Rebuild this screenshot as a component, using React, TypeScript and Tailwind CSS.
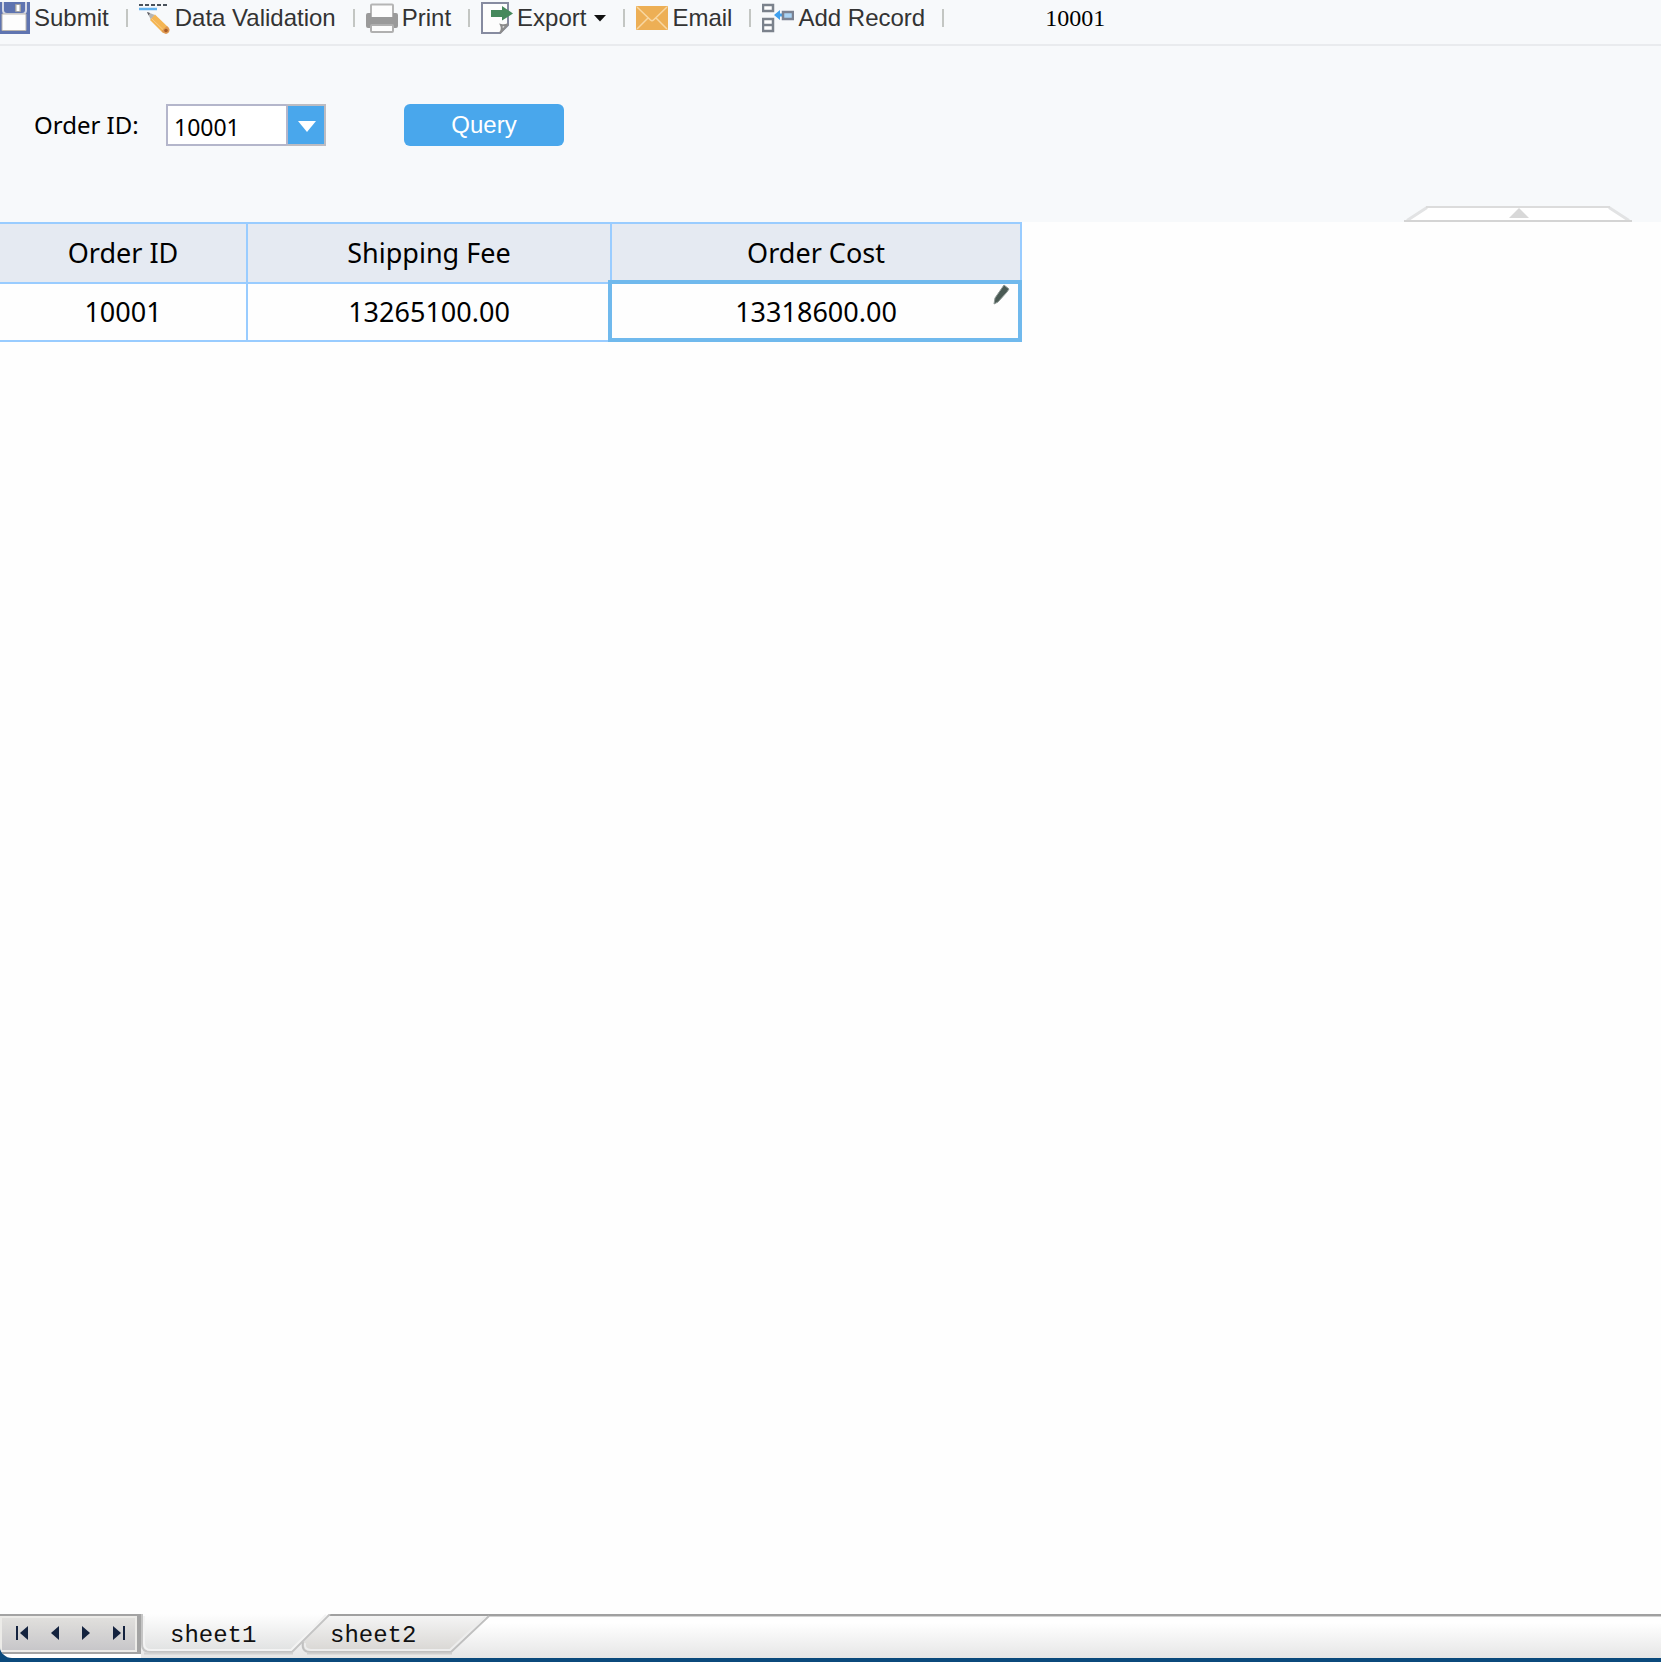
import { useState } from 'react';
import type { ReactNode } from 'react';

const ORDER_IDS = ['10001', '10002', '10003'];

const SHEETS = ['sheet1', 'sheet2'];

function SaveIcon() {
  return (
    <svg width="30" height="32" viewBox="0 0 30 32" className="shrink-0" aria-hidden="true">
      <path d="M0 0H30V32H0Z" fill="#5f74b0" />
      <path d="M2 0H27V8Q27 13 22 13H7Q2 13 2 8Z" fill="#d6d9e4" />
      <path d="M4 0H25V8Q25 11 22 11H7Q4 11 4 8Z" fill="#5f74b0" />
      <path d="M2 12H26V28.500H2Z" fill="#fdfdfd" stroke="#b9b4ae" strokeWidth="1" />
      <rect x="15" y="2" width="6" height="8" rx="1" fill="#a3a3a3" />
      <rect x="16.500" y="3" width="3" height="6" fill="#fff" />
    </svg>
  );
}

function ValidationIcon() {
  return (
    <svg width="32" height="32" viewBox="0 0 32 32" className="shrink-0" aria-hidden="true">
      <path d="M0 3H29" stroke="#4a525c" strokeWidth="2" strokeDasharray="4 2" />
      <path d="M0 7H18" stroke="#62b3f0" strokeWidth="2.500" />
      <path d="M8 10L16 13L12 18Z" fill="#b5b5b5" />
      <path d="M8 10L11 11L9.500 13.500Z" fill="#5f5f66" />
      <path d="M16 12.500L30 26L24 31L11 18Z" fill="#f4b553" />
      <path d="M12.500 16.500L26 29.500" stroke="#f8cc86" strokeWidth="1" />
      <path d="M24.500 31L22.500 29L28 24L30.500 27Q31 31 27 32Z" fill="#dd9750" />
      <circle cx="27" cy="28.500" r="1.800" fill="#a65b26" />
    </svg>
  );
}

function PrintIcon() {
  return (
    <svg width="32" height="32" viewBox="0 0 32 32" className="shrink-0" aria-hidden="true">
      <rect x="5" y="2.500" width="22" height="16" rx="1" fill="#fdfdfd" stroke="#b5b5b5" strokeWidth="2" />
      <path d="M2 11H5V15H27V11H30Q32 11 32 13V24Q32 26 30 26H2Q0 26 0 24V13Q0 11 2 11Z" fill="#9a9a9a" />
      <rect x="5" y="23" width="22" height="7" rx="1" fill="#fdfdfd" stroke="#b0b0b0" strokeWidth="2" />
    </svg>
  );
}

function ExportIcon() {
  return (
    <svg width="32" height="32" viewBox="0 0 32 32" className="shrink-0" aria-hidden="true">
      <path d="M1 1H27V23L19 31H1Z" fill="#fdfdfd" stroke="#868ba0" strokeWidth="2" />
      <path d="M19 31Q22 27 20 23Q24 24 27 22Z" fill="#f4f4f4" stroke="#8c8c8c" strokeWidth="2" />
      <path d="M10 8H21V4L32 11.500L21 18.500V15H10Z" fill="#45885c" />
    </svg>
  );
}

function EmailIcon() {
  return (
    <svg width="32" height="32" viewBox="0 0 32 32" className="shrink-0" aria-hidden="true">
      <rect x="0" y="4" width="32" height="24" rx="1" fill="#edaf55" />
      <path d="M1 5L14.500 18Q16 19.500 17.500 18L31 5M1 27L12 16M31 27L20 16" fill="none" stroke="#f8d7a2" strokeWidth="1.500" />
    </svg>
  );
}

function AddRecordIcon() {
  return (
    <svg width="32" height="32" viewBox="0 0 32 32" className="shrink-0" aria-hidden="true">
      <rect x="1" y="3" width="10" height="6" fill="#fff" stroke="#7b828c" strokeWidth="2.500" />
      <rect x="1" y="17" width="10" height="12" fill="#fff" stroke="#7b828c" strokeWidth="2.500" />
      <path d="M1 23H11" stroke="#7b828c" strokeWidth="2.500" />
      <path d="M12 13L18 8V11.500H21V14.500H18V18Z" fill="#3fa0ee" />
      <rect x="21" y="10" width="10" height="7" fill="#a9d3f5" stroke="#7b8292" strokeWidth="2.500" />
    </svg>
  );
}

interface ToolButtonProps {
  icon: ReactNode;
  label: string;
  hasMenu?: boolean;
}

function ToolButton({ icon, label, hasMenu }: ToolButtonProps) {
  return (
    <div className="flex shrink-0 items-center">
      <button type="button" className="flex items-center gap-1 text-2xl leading-8 text-[#333]">
        {icon}
        <span>{label}</span>
        {hasMenu && (
          <svg width="12" height="8" viewBox="0 0 12 8" className="ml-1" aria-hidden="true">
            <path d="M0 1H12L6 7.500Z" fill="#111" />
          </svg>
        )}
      </button>
      <span className="ml-[17px] mr-[11px] h-[18px] w-0.5 bg-[#c3c6c3]" />
    </div>
  );
}

function Toolbar({ orderId }: { orderId: string }) {
  return (
    <div className="flex items-start border-b-2 border-[#e9ebee] pt-0.5 pb-2.5">
      <ToolButton icon={<SaveIcon />} label="Submit" />
      <ToolButton icon={<ValidationIcon />} label="Data Validation" />
      <ToolButton icon={<PrintIcon />} label="Print" />
      <ToolButton icon={<ExportIcon />} label="Export" hasMenu />
      <ToolButton icon={<EmailIcon />} label="Email" />
      <ToolButton icon={<AddRecordIcon />} label="Add Record" />
      <span className="ml-[90px] font-['Liberation_Serif',serif] text-2xl leading-8 text-black">{orderId}</span>
    </div>
  );
}

interface QueryPanelProps {
  value: string;
  onChange: (value: string) => void;
  onQuery: () => void;
}

function QueryPanel({ value, onChange, onQuery }: QueryPanelProps) {
  return (
    <div className="relative flex items-start pt-[58px] pb-[76px] pl-[34px]">
      <label
        htmlFor="order-id"
        className="w-[132px] font-['Noto_Sans',sans-serif] text-2xl leading-[42px] text-black"
      >
        Order ID:
      </label>
      <div className="relative">
        <select
          id="order-id"
          value={value}
          onChange={(e) => onChange(e.target.value)}
          className="block h-[42px] w-40 appearance-none border-2 border-[#b4b6cb] bg-white pt-0.5 pl-1.5 font-['Noto_Sans',sans-serif] text-[23px] leading-[38px] text-black outline-none"
        >
          {ORDER_IDS.map((id) => (
            <option key={id}>{id}</option>
          ))}
        </select>
        <span className="pointer-events-none absolute inset-y-0 right-0 flex w-10 items-center justify-center border-2 border-[#bcbcc2] border-l-[#b4b6cb] bg-[#49a7ec]">
          <svg width="18" height="12" viewBox="0 0 18 12" className="mt-1 ml-0.5" aria-hidden="true">
            <path d="M0 0H18L9 11Z" fill="#fff" />
          </svg>
        </span>
      </div>
      <button
        type="button"
        onClick={onQuery}
        className="ml-[78px] h-[42px] w-40 rounded-md bg-[#49a7ec] text-2xl leading-[42px] text-white"
      >
        Query
      </button>
      <button type="button" aria-label="Collapse" className="absolute right-[29px] bottom-0">
        <svg width="228" height="16" viewBox="0 0 228 16" className="block" aria-hidden="true">
          <path d="M3 15L23 1H205L225 15Z" fill="#fff" />
          <path d="M3 14.500L23 1.500M205 1.500L225 14.500" stroke="#e2e3e4" strokeWidth="3" />
          <path d="M22 1H206" stroke="#dcdcdc" strokeWidth="2" />
          <path d="M0 15H228" stroke="#d4d4d4" strokeWidth="2" />
          <path d="M115 2L125 12H105Z" fill="#d8d8d8" />
        </svg>
      </button>
    </div>
  );
}

function OrderTable({ orderId }: { orderId: string }) {
  const head = 'h-[62px] border-y-2 border-r-2 border-[#99ccff] bg-[#e5eaf2] p-0 font-normal';
  const cell = 'h-[58px] border-r-2 border-b-2 border-[#99ccff] p-0';

  return (
    <table className="w-[1022px] table-fixed border-separate border-spacing-0 text-center font-['Noto_Sans',sans-serif] text-[27px] leading-[38px] text-black">
      <colgroup>
        <col className="w-[248px]" />
        <col className="w-[364px]" />
        <col />
      </colgroup>
      <thead>
        <tr>
          <th className={head}>Order ID</th>
          <th className={head}>Shipping Fee</th>
          <th className={head}>Order Cost</th>
        </tr>
      </thead>
      <tbody>
        <tr>
          <td className={cell}>{orderId}</td>
          <td className={cell}>13265100.00</td>
          <td className={`${cell} relative`}>
            13318600.00
            {/* Selection frame, overlaps the neighbouring cell borders */}
            <span className="pointer-events-none absolute -top-1 -right-0.5 -bottom-0.5 -left-1 border-4 border-[#70b9ed]" />
            <svg width="18" height="22" viewBox="0 0 18 22" className="absolute top-0 right-2.5" aria-hidden="true">
              <path d="M12 1L17 5L15 8L6 18L2 20L3 14Z" fill="#4a5a54" stroke="#8f9996" strokeWidth="1" />
            </svg>
          </td>
        </tr>
      </tbody>
    </table>
  );
}

function SheetNav() {
  const arrows = [
    { label: 'First sheet', bar: 'M1 0V14', d: 'M12 0V14L4 7Z' },
    { label: 'Previous sheet', d: 'M11 0V14L3 7Z' },
    { label: 'Next sheet', d: 'M1 0V14L9 7Z' },
    { label: 'Last sheet', bar: 'M11 0V14', d: 'M0 0V14L8 7Z' },
  ];

  return (
    <div className="flex h-10 w-[141px] shrink-0 items-center justify-between border-t-2 border-r-4 border-b-2 border-[#a3a3a3] bg-linear-to-b from-[#e2e1de] to-[#c6c5c8] pr-3 pb-0.5 pl-4 shadow-[inset_0_0_0_2px_#ecebe8]">
      {arrows.map(({ label, bar, d }) => (
        <button key={label} type="button" aria-label={label}>
          <svg width="12" height="14" viewBox="0 0 12 14" className="block" aria-hidden="true">
            {bar && <path d={bar} stroke="#14233f" strokeWidth="2" />}
            <path d={d} fill="#14233f" />
          </svg>
        </button>
      ))}
    </div>
  );
}

interface SheetTabProps {
  name: string;
  active: boolean;
  onSelect: () => void;
}

function SheetTab({ name, active, onSelect }: SheetTabProps) {
  const fill = `tab-${name}`;

  return (
    <button
      type="button"
      onClick={onSelect}
      className={`relative h-11 w-40 shrink-0 pl-[29px] text-left font-['Liberation_Mono',monospace] text-2xl leading-[42px] text-[#111] ${active ? 'z-10' : ''}`}
    >
      <svg width="190" height="44" viewBox="0 0 190 44" className="absolute top-0 left-0" aria-hidden="true">
        <defs>
          <linearGradient id={fill} x1="0" y1="0" x2="0" y2="1">
            <stop offset="0" stopColor={active ? '#fefefe' : '#f4f4f4'} />
            <stop offset="1" stopColor={active ? '#e0e1e1' : '#d8d6d3'} />
          </linearGradient>
        </defs>
        {active ? (
          <>
            <path d="M0 0H189L151 38H9Q0 38 0 30Z" fill={`url(#${fill})`} />
            <path d="M1 0V30Q1 38 9 38H151L189 0" fill="none" stroke="#c4c4c4" strokeWidth="2" />
            <path d="M3 39.500H152" stroke="#d2d2d2" strokeWidth="2" />
            <path d="M3 2V29Q3 36 10 36H150L185 1" fill="none" stroke="#f3f3f3" strokeWidth="2" />
          </>
        ) : (
          <>
            <path d="M28 2H188L150 38H9Q0 38 2 28Z" fill={`url(#${fill})`} />
            <path d="M2 28Q0 38 9 38H150L188 2" fill="none" stroke="#c0c0c0" strokeWidth="2" />
            <path d="M6 39.500H151" stroke="#cfcfcf" strokeWidth="2" />
            <path d="M4 29Q3 36 10 36H149L184 3" fill="none" stroke="#ededed" strokeWidth="2" />
          </>
        )}
      </svg>
      <span className="relative">{name}</span>
    </button>
  );
}

export default function App() {
  const [selectedId, setSelectedId] = useState('10001');
  const [orderId, setOrderId] = useState('10001');
  const [sheet, setSheet] = useState('sheet1');

  return (
    <div className="flex min-h-screen flex-col bg-[#fefefe] font-['Liberation_Sans',Arial,sans-serif]">
      <header className="bg-[#f7f9fb]">
        <Toolbar orderId={orderId} />
        <QueryPanel value={selectedId} onChange={setSelectedId} onQuery={() => setOrderId(selectedId)} />
      </header>

      <main className="flex-1">
        <OrderTable orderId={orderId} />
      </main>

      <footer className="bg-[#0b4a7c] pb-1">
        <div className="flex h-11 items-start overflow-hidden rounded-bl-xl bg-white">
          <SheetNav />
          <div className="relative flex h-full flex-1 bg-linear-to-b from-white from-20% to-[#e6e6e6]">
            <span className="absolute inset-x-0 top-0 h-[3px] border-t-2 border-b border-t-[#a0a0a0] border-b-[#d2d2d2]" />
            {SHEETS.map((name) => (
              <SheetTab key={name} name={name} active={name === sheet} onSelect={() => setSheet(name)} />
            ))}
          </div>
        </div>
      </footer>
    </div>
  );
}
